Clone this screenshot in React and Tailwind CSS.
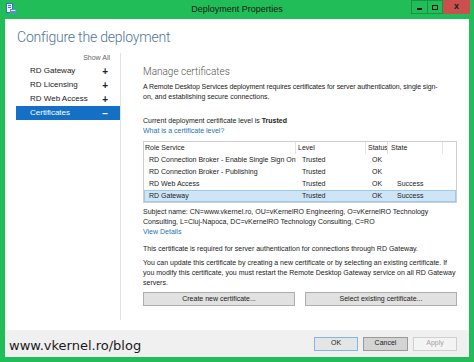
export default function App() {
  const rows = [
    { name: "RD Connection Broker - Enable Single Sign On", level: "Trusted", status: "OK", state: "" },
    { name: "RD Connection Broker - Publishing", level: "Trusted", status: "OK", state: "" },
    { name: "RD Web Access", level: "Trusted", status: "OK", state: "Success" },
    { name: "RD Gateway", level: "Trusted", status: "OK", state: "Success", selected: true },
  ];

  return (
    <div
      className="relative w-[474px] h-[362px] bg-[#21bd58] flex flex-col overflow-hidden text-[#222]"
      style={{ fontFamily: '"Liberation Sans", Arial, sans-serif' }}
    >
      {/* Barra de título */}
      <div className="relative h-[19px] flex items-center justify-center">
        <svg className="absolute left-[6px] top-[3px]" width="11" height="11" viewBox="0 0 11 11">
          <rect x="0.5" y="0.5" width="6" height="9" fill="#e8f0fb" stroke="#3d6fc0" />
          <rect x="2" y="2" width="3" height="1" fill="#3d6fc0" />
          <rect x="2" y="4" width="3" height="1" fill="#3d6fc0" />
          <rect x="4" y="6" width="6.5" height="4.5" fill="#5a8fd8" />
          <rect x="5" y="7" width="4.5" height="1" fill="#dce8f8" />
        </svg>
        <span className="text-[9px] text-[#1b1b1b]">Deployment Properties</span>
        <div className="absolute right-[4px] top-0 flex h-[14px]">
          <div className="w-[17px] h-full border border-[#179346] flex items-center justify-center">
            <div className="w-[5px] h-[2px] bg-[#111] mt-[3px]" />
          </div>
          <div className="w-[15px] h-full border-y border-r border-[#179346] flex items-center justify-center">
            <div className="w-[6px] h-[5px] border-[1.5px] border-[#111]" />
          </div>
          <div className="w-[27px] h-full bg-[#c9504d] flex items-center justify-center text-[9px] font-bold text-[#1b1b1b]">
            x
          </div>
        </div>
      </div>

      <div className="flex-1 mx-[5px] mb-[5px] flex flex-col">
        <div className="flex-1 bg-white pl-[11px] pt-[8px] flex flex-col">
          <div
            className="h-[20px] flex items-center pl-[1px] text-[14px] tracking-[-0.2px] font-light text-[#4f7396]"
            style={{ fontFamily: "Roboto, sans-serif" }}
          >
            Configure the deployment
          </div>

          <div className="flex mt-[6px] h-[267px]">
            {/* Navegación */}
            <div className="w-[105px] shrink-0 border-r border-[#e2e2e2] flex flex-col text-[8px]">
              <div className="h-[11px] flex items-center justify-end pr-[10px] text-[7px] text-[#666]">Show All</div>
              {["RD Gateway", "RD Licensing", "RD Web Access"].map((t) => (
                <div key={t} className="h-[14px] flex items-center justify-between pl-[14px] pr-[12px]">
                  <span>{t}</span>
                  <span className="font-bold text-[10px]">+</span>
                </div>
              ))}
              <div className="h-[14px] flex items-center justify-between pl-[14px] pr-[12px] bg-[#1470c4] text-white">
                <span>Certificates</span>
                <span className="font-bold text-[10px]">−</span>
              </div>
            </div>

            {/* Contenido */}
            <div className="flex-1 min-w-0 pl-[22px] pr-[12px] flex flex-col text-[7px] whitespace-nowrap">
              <div
                className="mt-[11px] h-[14px] flex items-center text-[10px] font-light text-[#555]"
                style={{ fontFamily: "Roboto, sans-serif" }}
              >
                Manage certificates
              </div>
              <div className="mt-[4px] leading-[10px]">
                <div className="tracking-[-0.1px]">
                  A Remote Desktop Services deployment requires certificates for server authentication, single sign-
                </div>
                <div>on, and establishing secure connections.</div>
              </div>
              <div className="mt-[14px] leading-[10px]">
                <div>
                  Current deployment certificate level is <span className="font-bold">Trusted</span>
                </div>
                <div className="text-[#2673b8]">What is a certificate level?</div>
              </div>

              {/* Tabla */}
              <div className="mt-[5px] border border-[#cfcfcf] flex flex-col">
                <div className="h-[12px] flex items-center">
                  <div className="w-[152px] pl-[1px] border-r border-[#e3e3e3] h-full flex items-center">Role Service</div>
                  <div className="w-[70px] pl-[2px] border-r border-[#e3e3e3] h-full flex items-center">Level</div>
                  <div className="w-[22px] pl-[2px] border-r border-[#e3e3e3] h-full flex items-center overflow-hidden">Status</div>
                  <div className="w-[55px] pl-[3px] border-r border-[#e3e3e3] h-full flex items-center">State</div>
                  <div className="flex-1" />
                </div>
                {rows.map((r) => (
                  <div
                    key={r.name}
                    className={`h-[12px] flex items-center border ${
                      r.selected ? "bg-[#cde5f7] border-[#9cc9ec]" : "border-transparent"
                    }`}
                  >
                    <div className="w-[151px] pl-[4px]">{r.name}</div>
                    <div className="w-[70px] pl-[6px]">{r.level}</div>
                    <div className="w-[22px] pl-[6px]">{r.status}</div>
                    <div className="w-[55px] pl-[9px]">{r.state}</div>
                  </div>
                ))}
              </div>

              <div className="mt-[4px] leading-[10px]">
                <div>Subject name: CN=www.vkernel.ro, OU=vKernelRO Engineering, O=vKernelRO Technology</div>
                <div>Consulting, L=Cluj-Napoca, DC=vKernelRO Technology Consulting, C=RO</div>
                <div className="text-[#2673b8]">View Details</div>
              </div>
              <div className="mt-[7px] leading-[10px]">
                This certificate is required for server authentication for connections through RD Gateway.
              </div>
              <div className="mt-[4px] leading-[10px]">
                <div>You can update this certificate by creating a new certificate or by selecting an existing certificate. If</div>
                <div>you modify this certificate, you must restart the Remote Desktop Gateway service on all RD Gateway</div>
                <div>servers.</div>
              </div>

              <div className="mt-[4px] flex justify-between">
                <button className="w-[152px] h-[14px] bg-[#e1e1e1] border border-[#adadad] text-[7px] text-[#222]">
                  Create new certificate...
                </button>
                <button className="w-[152px] h-[14px] bg-[#e1e1e1] border border-[#adadad] text-[7px] text-[#222]">
                  Select existing certificate...
                </button>
              </div>
            </div>
          </div>
        </div>

        {/* Barra inferior */}
        <div className="h-[27px] bg-[#f0f0f0] flex items-center justify-end gap-[5px] pr-[12px] text-[7px]">
          <button className="w-[44px] h-[14px] bg-[#e5e5e5] border border-[#7eb4ea] text-[#222]">OK</button>
          <button className="w-[45px] h-[14px] bg-[#d4d4d4] border border-[#999] text-[#222]">Cancel</button>
          <button className="w-[44px] h-[14px] bg-[#f4f4f4] border border-[#cfcfcf] text-[#a3a3a3]">Apply</button>
        </div>
      </div>

      {/* Marca de agua */}
      <div
        className="absolute left-[9px] top-[338px] text-[13px] leading-[15px] text-[#1a1a1a]"
        style={{ fontFamily: '"DejaVu Sans", sans-serif' }}
      >
        www.vkernel.ro/blog
      </div>
    </div>
  );
}
